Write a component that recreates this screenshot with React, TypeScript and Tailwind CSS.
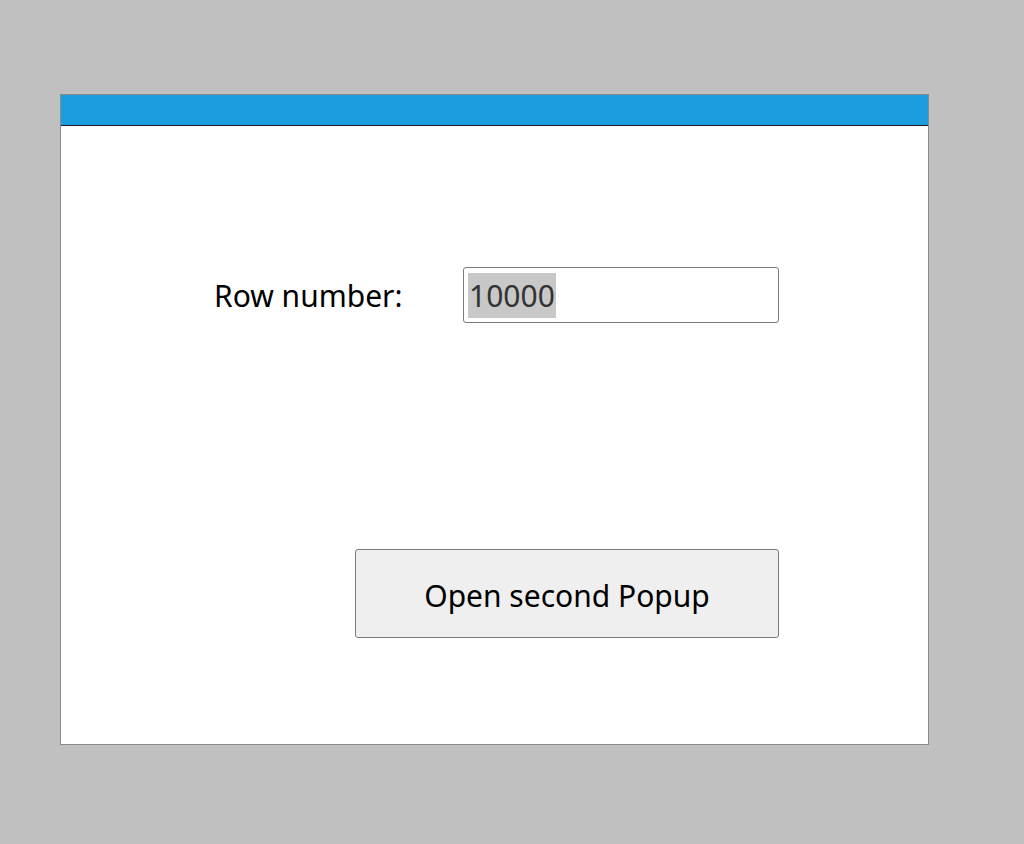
export default function App() {
  return (
    <div
      className="w-[1024px] h-[844px] bg-[#c0c0c0] pt-[94px] pl-[60px]"
      style={{ fontFamily: '"Noto Sans", "Open Sans", sans-serif' }}
    >
      <div className="w-[869px] h-[651px] border border-[#8a8a8a] bg-white flex flex-col">
        <div className="h-[31px] bg-[#1b9ddf] border-b border-[#1a1a1a] shrink-0" />
        <div className="flex flex-col pt-[141px] pl-[153px]">
          <div className="flex items-center h-[56px]">
            <label className="w-[249px] text-[30px] text-black">Row number:</label>
            <div className="w-[316px] h-[56px] border border-[#7a7a7a] rounded-[3px] flex items-center px-[4px]">
              <span className="bg-[#c8c8c8] text-[#333] text-[30px] leading-[45px] px-[1px]">
                10000
              </span>
            </div>
          </div>
          <button className="mt-[226px] ml-[141px] w-[424px] h-[89px] bg-[#efefef] border border-[#7a7a7a] rounded-[3px] text-[30px] text-black pt-[4px]">
            Open second Popup
          </button>
        </div>
      </div>
    </div>
  );
}
